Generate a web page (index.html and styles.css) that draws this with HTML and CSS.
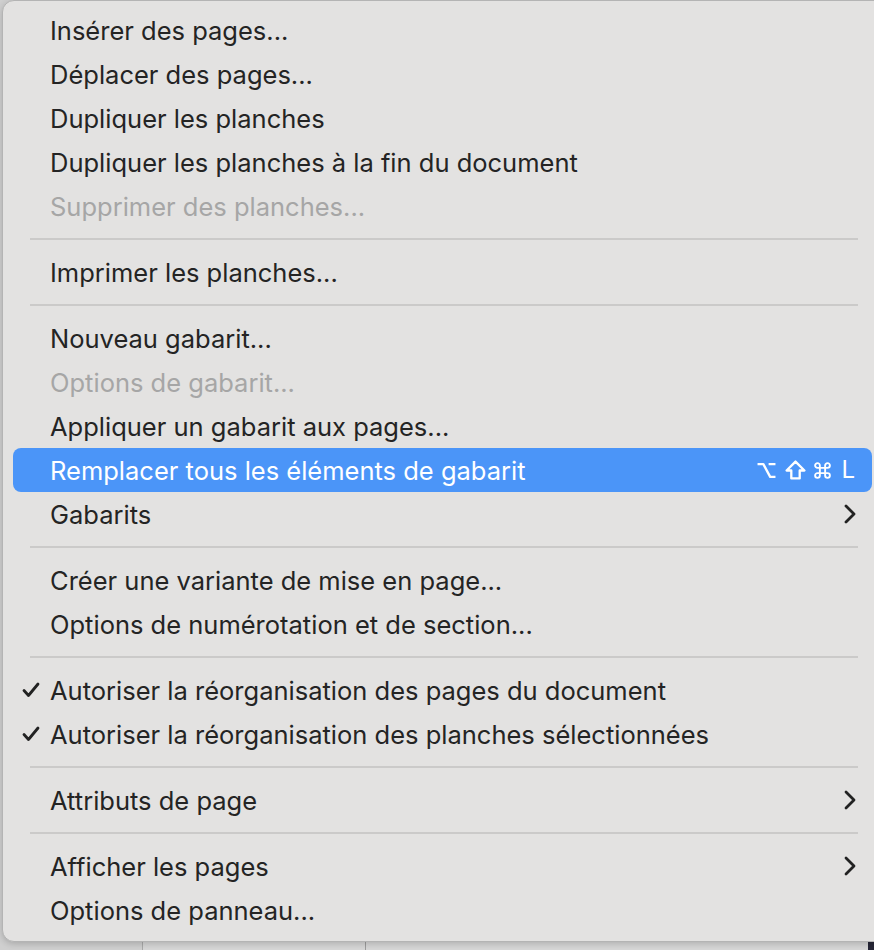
FILE: index.html
```html
<!DOCTYPE html>
<html lang="fr">
<head>
<meta charset="utf-8">
<title>Menu</title>
<link rel="stylesheet" href="styles.css">
</head>
<body>
<div class="backdrop">
  <div class="bd-col bd-a"></div>
  <div class="bd-col bd-b"></div>
  <div class="bd-col bd-c"></div>
  <div class="bd-col bd-d"></div>
</div>
<div class="menu">
  <div class="item">Insérer des pages...</div>
  <div class="item">Déplacer des pages...</div>
  <div class="item">Dupliquer les planches</div>
  <div class="item">Dupliquer les planches à la fin du document</div>
  <div class="item disabled">Supprimer des planches...</div>
  <div class="sep"></div>
  <div class="item">Imprimer les planches...</div>
  <div class="sep"></div>
  <div class="item">Nouveau gabarit...</div>
  <div class="item disabled">Options de gabarit...</div>
  <div class="item">Appliquer un gabarit aux pages...</div>
  <div class="item active"><span class="label">Remplacer tous les éléments de gabarit</span><span class="shortcut"><svg class="k-opt" viewBox="0 0 18 16" width="19" height="17"><path d="M0.5 2 H6 L12.5 14 H17.5 M11 2 H17.5" fill="none" stroke="#fff" stroke-width="2.2" stroke-linejoin="round"/></svg><svg class="k-shift" viewBox="0 0 20 19" width="21" height="20"><path d="M10 1.5 L18.5 10 H14 V17.5 H6 V10 H1.5 Z" fill="none" stroke="#fff" stroke-width="2.2" stroke-linejoin="round"/></svg><svg class="k-cmd" viewBox="0 0 18 18" width="19" height="19"><path d="M6.5 6.5 V4.25 A2.25 2.25 0 1 0 4.25 6.5 H13.75 A2.25 2.25 0 1 0 11.5 4.25 V13.75 A2.25 2.25 0 1 0 13.75 11.5 H4.25 A2.25 2.25 0 1 0 6.5 13.75 Z" fill="none" stroke="#fff" stroke-width="1.8" stroke-linejoin="round"/></svg><span class="key-l">L</span></span></div>
  <div class="item"><span class="label">Gabarits</span><svg class="chev" viewBox="0 0 12 20" width="12" height="20"><path d="M2 2 L10 10 L2 18" fill="none" stroke="#222" stroke-width="2.8" stroke-linecap="round" stroke-linejoin="round"/></svg></div>
  <div class="sep"></div>
  <div class="item">Créer une variante de mise en page...</div>
  <div class="item">Options de numérotation et de section...</div>
  <div class="sep"></div>
  <div class="item"><svg class="check" viewBox="0 0 18 16" width="18" height="16"><path d="M2 8.5 L6.5 13.5 L16 2" fill="none" stroke="#222" stroke-width="2.8" stroke-linecap="round" stroke-linejoin="round"/></svg>Autoriser la réorganisation des pages du document</div>
  <div class="item"><svg class="check" viewBox="0 0 18 16" width="18" height="16"><path d="M2 8.5 L6.5 13.5 L16 2" fill="none" stroke="#222" stroke-width="2.8" stroke-linecap="round" stroke-linejoin="round"/></svg>Autoriser la réorganisation des planches sélectionnées</div>
  <div class="sep"></div>
  <div class="item"><span class="label">Attributs de page</span><svg class="chev" viewBox="0 0 12 20" width="12" height="20"><path d="M2 2 L10 10 L2 18" fill="none" stroke="#222" stroke-width="2.8" stroke-linecap="round" stroke-linejoin="round"/></svg></div>
  <div class="sep"></div>
  <div class="item"><span class="label">Afficher les pages</span><svg class="chev" viewBox="0 0 12 20" width="12" height="20"><path d="M2 2 L10 10 L2 18" fill="none" stroke="#222" stroke-width="2.8" stroke-linecap="round" stroke-linejoin="round"/></svg></div>
  <div class="item">Options de panneau...</div>
</div>
</body>
</html>
```
FILE: styles.css
```css
html, body {
  margin: 0;
  padding: 0;
  width: 874px;
  height: 950px;
  overflow: hidden;
}
body {
  background: #c9c9c9;
  font-family: Inter, "Noto Sans", "Liberation Sans", sans-serif;
  position: relative;
}
.backdrop {
  position: absolute;
  left: 0;
  top: 0;
  width: 874px;
  height: 950px;
  display: flex;
}
.bd-col {
  height: 100%;
  background: #d6d6d6;
}
.bd-a { width: 142px; background: #cfcfcf; border-right: 1px solid #a9a9a9; }
.bd-b { width: 222px; border-right: 1px solid #9c9c9c; }
.bd-c { width: 502px; }
.bd-d { flex: 1; background: #262637; }
.menu {
  position: absolute;
  left: 2px;
  top: 0;
  width: 900px;
  box-sizing: border-box;
  padding: 7px 29px 9px 10px;
  background: #e3e2e1;
  border: 1px solid #b4b4b4;
  border-radius: 12px;
  box-shadow: 0 2px 6px rgba(0,0,0,0.18);
  display: flex;
  flex-direction: column;
}
.item {
  height: 44px;
  display: flex;
  align-items: center;
  position: relative;
  padding: 0 16px 0 37px;
  font-size: 25.5px;
  color: #242424;
  border-radius: 8px;
  white-space: nowrap;
}
.item.disabled { color: #a6a6a6; }
.item.active {
  background: #4b95f8;
  color: #ffffff;
}
.label { flex: 1; }
.shortcut {
  display: flex;
  align-items: center;
  margin-right: 1px;
}
.shortcut svg { display: block; }
.k-opt { margin-right: 9px; }
.k-shift { margin-right: 7px; }
.k-cmd { margin-right: 9px; }
.key-l {
  font-size: 24px;
  line-height: 1;
}
.chev {
  display: block;
  margin-right: 0;
}
.check {
  position: absolute;
  left: 9px;
  top: 14px;
}
.sep {
  height: 22px;
  display: flex;
  align-items: center;
  padding: 0 14px 0 17px;
}
.sep::before {
  content: "";
  display: block;
  flex: 1;
  height: 2px;
  background: #cbcac9;
}
```
